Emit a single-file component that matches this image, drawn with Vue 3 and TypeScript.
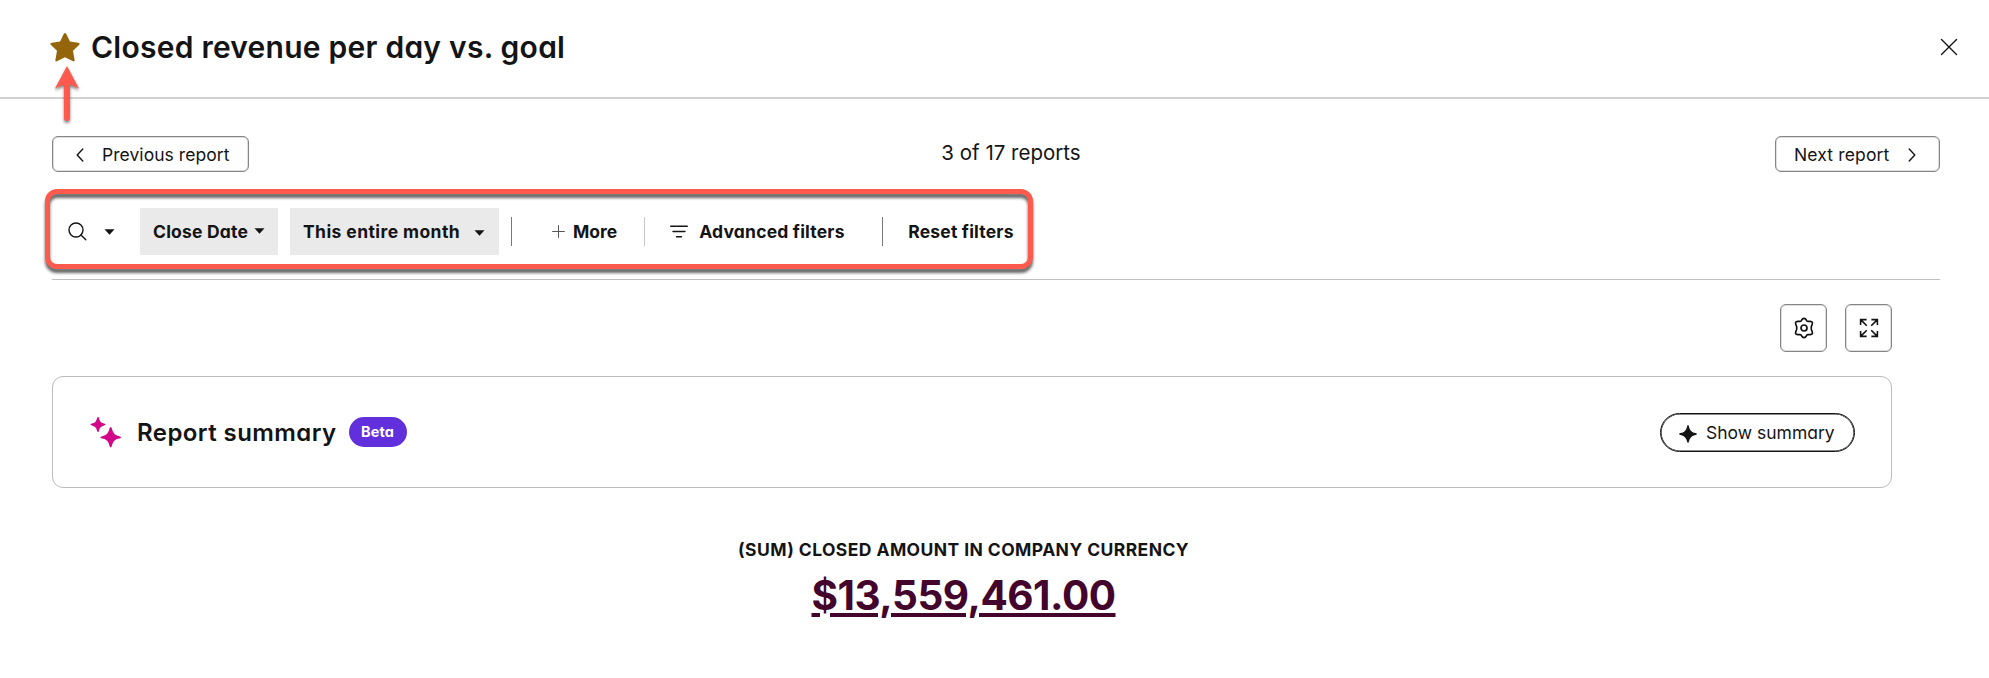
<script setup lang="ts">
import { ref } from 'vue'

const title = ref('Closed revenue per day vs. goal')
const position = ref({ current: 3, total: 17 })
const metric = ref({ label: '(SUM) CLOSED AMOUNT IN COMPANY CURRENCY', value: '$13,559,461.00' })
</script>

<template>
  <main class="panel">
    <header class="header">
      <svg class="star" width="30" height="29" viewBox="0 0 30 29">
        <path d="M13.7 1.1Q15-.9 16.3 1.1L19.9 8.5 28.2 9.7Q30.8 10.2 29 12L23 17.8 24.6 26.7Q24.9 29.2 22.6 28.1L15 24.2 7.4 28.1Q5.1 29.2 5.4 26.7L7 17.8 1 12Q-.8 10.2 1.8 9.7L10.1 8.5Z" fill="#94650a" />
      </svg>
      <h1>{{ title }}</h1>
      <svg class="close" width="18" height="18" viewBox="0 0 18 18">
        <path d="M1.5 1.5 16.5 16.5M16.5 1.5 1.5 16.5" stroke="#141414" stroke-width="1.4" stroke-linecap="round" />
      </svg>
    </header>

    <nav class="pager">
      <button class="page-btn prev">
        <svg width="8" height="14" viewBox="0 0 8 14"><path d="M6.8 1 1.2 7 6.8 13" class="line" /></svg>
        <span>Previous report</span>
      </button>
      <span class="count">{{ position.current }} of {{ position.total }} reports</span>
      <button class="page-btn next">
        <span>Next report</span>
        <svg width="8" height="14" viewBox="0 0 8 14"><path d="M1.2 1 6.8 7 1.2 13" class="line" /></svg>
      </button>
    </nav>

    <section class="filters">
      <svg class="search" width="19" height="19" viewBox="0 0 19 19"><circle cx="8" cy="8" r="7" class="line" /><path d="M13 13 17.8 17.8" class="line" /></svg>
      <svg class="caret search-caret" width="11" height="6" viewBox="0 0 11 6"><path d="M.5.3H10.5L5.5 5.8Z" /></svg>
      <button class="chip date">
        <span>Close Date</span>
        <svg class="caret" width="11" height="6" viewBox="0 0 11 6"><path d="M.5.3H10.5L5.5 5.8Z" /></svg>
      </button>
      <button class="chip month">
        <span>This entire month</span>
        <svg class="caret" width="11" height="6" viewBox="0 0 11 6"><path d="M.5.3H10.5L5.5 5.8Z" /></svg>
      </button>
      <i class="divider first"></i>
      <button class="link more">
        <svg width="13" height="13" viewBox="0 0 13 13"><path d="M6.5.2V12.8M.2 6.5H12.8" stroke="#555" stroke-width="1" /></svg>
        <span>More</span>
      </button>
      <i class="divider light"></i>
      <button class="link advanced">
        <svg width="18" height="13" viewBox="0 0 18 13"><path d="M.7 1.2H17.3M3 6.5H15M6.5 11.8H11.5" class="line" /></svg>
        <span>Advanced filters</span>
      </button>
      <i class="divider last"></i>
      <button class="link reset"><span>Reset filters</span></button>
    </section>

    <section class="report">
      <div class="tools">
        <button class="tool">
          <svg width="20" height="22" viewBox="0 0 20 22">
            <path class="line bold" d="M8.1 2.4Q10 .2 11.9 2.4L12.7 3.7Q13.3 4.5 14.3 4.4L16.3 4.3Q19.2 4.6 18.2 7.3L17.4 9.5Q17 11 17.4 12.5L18.2 14.7Q19.2 17.4 16.3 17.7L14.3 17.6Q13.3 17.5 12.7 18.3L11.9 19.6Q10 21.8 8.1 19.6L7.3 18.3Q6.7 17.5 5.7 17.6L3.7 17.7Q.8 17.4 1.8 14.7L2.6 12.5Q3 11 2.6 9.5L1.8 7.3Q.8 4.6 3.7 4.3L5.7 4.4Q6.7 4.5 7.3 3.7Z" />
            <circle class="line bold" cx="10" cy="11" r="3" />
          </svg>
        </button>
        <button class="tool">
          <svg width="20" height="20" viewBox="0 0 20 20">
            <path class="line corners" d="M1.6 7V1.6H7.6M1.6 1.6 7.8 7.8M12.4 1.6H18.4V7M18.4 1.6 12.2 7.8M18.4 13V18.4H12.4M18.4 18.4 12.2 12.2M7.6 18.4H1.6V13M1.6 18.4 7.8 12.2" />
          </svg>
        </button>
      </div>

      <div class="card">
        <svg class="sparkles" width="32" height="31" viewBox="0 0 32 31" fill="#d20688">
          <path d="M8 0Q8.7 0 9 1.2 9.7 5.8 14.2 6.6 15.5 7 15.5 7.5 15.5 8 14.2 8.4 9.7 9.2 9 13.8 8.7 15 8 15 7.3 15 7 13.8 6.3 9.2 1.8 8.4.5 8 .5 7.5.5 7 1.8 6.6 6.3 5.8 7 1.2 7.3 0 8 0Z" />
          <path d="M20.7 10Q21.5 10 21.9 11.6 23 18.2 29.2 19.3 31 19.7 31 20.4 31 21.1 29.2 21.5 23 22.6 21.9 28.8 21.5 30.5 20.7 30.5 19.9 30.5 19.5 28.8 18.4 22.6 12.2 21.5 10.4 21.1 10.4 20.4 10.4 19.7 12.2 19.3 18.4 18.2 19.5 11.6 19.9 10 20.7 10Z" />
        </svg>
        <h2>Report summary</h2>
        <span class="badge">Beta</span>
        <button class="show">
          <svg width="18" height="18" viewBox="0 0 18 18"><path fill="#141414" d="M9 0Q9.6 0 9.9 1.4 10.9 7.1 16.6 8.1 18 8.4 18 9 18 9.6 16.6 9.9 10.9 10.9 9.9 16.6 9.6 18 9 18 8.4 18 8.1 16.6 7.1 10.9 1.4 9.9 0 9.6 0 9 0 8.4 1.4 8.1 7.1 7.1 8.1 1.4 8.4 0 9 0Z" /></svg>
          <span>Show summary</span>
        </button>
      </div>
    </section>

    <section class="metric">
      <div class="metric-label">{{ metric.label }}</div>
      <a class="metric-value">{{ metric.value }}</a>
    </section>

    <svg class="arrow" width="34" height="66" viewBox="0 0 34 66">
      <path d="M17 3 29 25.5 20 21.5V55Q20 58 17 58 14 58 14 55V21.5L5 25.5Z" fill="#ff5a4d" />
    </svg>
    <div class="callout"></div>
  </main>
</template>

<style scoped>
.panel {
  position: relative;
  width: 1989px;
  height: 678px;
  overflow: hidden;
  background: #fff;
  color: #141414;
  font-family: Inter, "Liberation Sans", sans-serif;
  font-feature-settings: "cv11";
  font-size: 17.5px;
}
.panel * { box-sizing: border-box; }
svg { display: block; flex: none; }
span { white-space: nowrap; }
button {
  display: flex;
  align-items: center;
  margin: 0;
  padding: 0;
  border: 0;
  background: none;
  color: inherit;
  font: inherit;
  font-feature-settings: inherit;
}
.line { fill: none; stroke: #141414; stroke-width: 1.4; stroke-linecap: round; stroke-linejoin: round; }
.bold { stroke-width: 1.7; }
.corners { stroke-width: 1.6; stroke-linecap: butt; stroke-linejoin: miter; }
.caret { fill: #141414; }

.header {
  display: flex;
  align-items: center;
  height: 99px;
  padding: 0 31px 3px 50px;
  border-bottom: 2px solid #d2d2d2;
}
h1 {
  margin: 0 0 1px 11px;
  font-size: 30px;
  line-height: 40px;
  font-weight: 600;
  letter-spacing: 0.24px;
}
.close { margin-left: auto; }

.pager {
  display: grid;
  grid-template-columns: 1fr auto 1fr;
  align-items: center;
  height: 36px;
  margin: 37px 49px 0 52px;
}
.page-btn {
  height: 36px;
  border: 1px solid #848484;
  border-radius: 6px;
  box-shadow: inset 0 0 0 0.5px rgba(0, 0, 0, 0.25);
}
.prev { width: 197px; padding: 1px 0 0 23px; gap: 18px; letter-spacing: 0.05px; }
.next { width: 165px; padding: 1px 0 0 18px; gap: 19px; justify-self: end; }
.next span { letter-spacing: 0.15px; }
.count { position: relative; left: 15px; top: -2px; font-size: 20.5px; }

.filters {
  display: flex;
  align-items: center;
  height: 72px;
  margin: 36px 49px 0 52px;
  padding: 0 0 25px 16px;
  border-bottom: 1px solid #c0c0c0;
  font-weight: 700;
}
.search-caret { margin: 2px 25px 0 17px; }
.chip { height: 47px; background: #eaeaea; }
.date { width: 138px; padding-left: 13px; gap: 6px; letter-spacing: 0.19px; }
.month { width: 209px; margin-left: 12px; padding-left: 13px; gap: 14px; letter-spacing: 0.42px; }
.month .caret { margin-top: 3px; }
.divider { width: 1px; height: 29px; background: #777; }
.first { margin-left: 12px; }
.more { margin-left: 40px; gap: 8px; }
.light { margin-left: 27px; background: #c8c8c8; }
.advanced { width: 175px; margin-left: 25px; gap: 11px; letter-spacing: 0.2px; }
.last { margin-left: 37px; }
.reset { margin-left: 25px; letter-spacing: 0.2px; }

.report { width: 1840px; margin: 24px 0 0 52px; }
.tools { display: flex; justify-content: flex-end; gap: 18px; }
.tool {
  justify-content: center;
  width: 47px;
  height: 48px;
  border: 1px solid #848484;
  border-radius: 6px;
  box-shadow: inset 0 0 0 0.5px rgba(0, 0, 0, 0.25);
}
.card {
  display: flex;
  align-items: center;
  height: 112px;
  margin-top: 24px;
  padding: 0 36px 0 37px;
  border: 1px solid #bcbcbc;
  border-radius: 11px;
}
h2 {
  margin: 1px 0 0 15px;
  font-size: 24px;
  line-height: 30px;
  font-weight: 600;
  letter-spacing: 0.42px;
}
.badge {
  height: 30px;
  width: 58px;
  margin-left: 12px;
  border-radius: 15px;
  background: #622fdc;
  color: #fff;
  font-size: 14.5px;
  line-height: 29px;
  font-weight: 700;
  text-align: center;
  letter-spacing: 0.15px;
}
.show {
  width: 195px;
  height: 39px;
  margin-left: auto;
  padding-left: 18px;
  gap: 9px;
  border: 1px solid #141414;
  border-radius: 20px;
  box-shadow: inset 0 0 0 0.6px #141414;
}
.show svg { margin-top: 3px; }

.metric { width: 1927px; margin-top: 48px; text-align: center; }
.metric-label { font-size: 17.5px; line-height: 28px; font-weight: 700; letter-spacing: 0.42px; }
.metric-value {
  display: block;
  margin-top: 7px;
  color: #43052b;
  font-size: 40.5px;
  line-height: 50px;
  font-weight: 700;
  letter-spacing: -0.506px;
  text-decoration: underline;
  text-decoration-thickness: 4px;
  text-underline-offset: 3px;
}

.arrow {
  position: absolute;
  left: 50px;
  top: 63px;
  filter: drop-shadow(0 2px 1.5px rgba(0, 0, 0, 0.5));
}
.callout {
  position: absolute;
  left: 45px;
  top: 189px;
  width: 988px;
  height: 80px;
  border: 5px solid #ff5a4d;
  border-radius: 12px;
  filter: drop-shadow(0 4px 1.5px rgba(0, 0, 0, 0.6));
}
</style>
